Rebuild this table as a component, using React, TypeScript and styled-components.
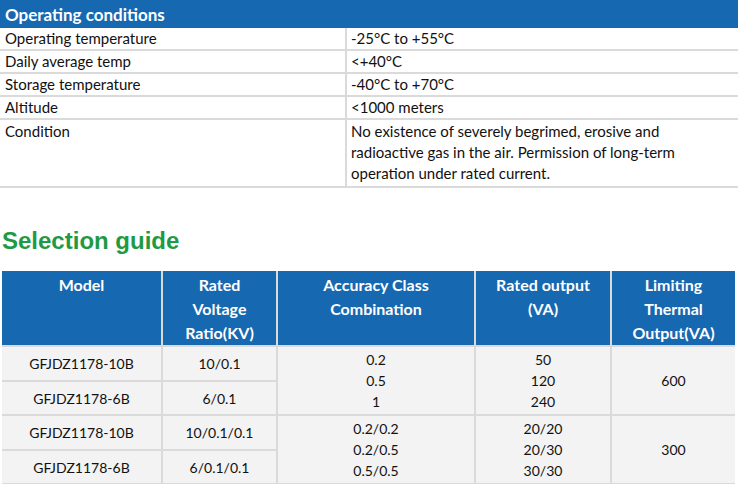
import styled, { createGlobalStyle } from "styled-components";

const GlobalStyle = createGlobalStyle`
  body {
    margin: 0;
    background: #ffffff;
    font-family: Lato, "Open Sans", sans-serif;
    color: #111111;
  }
`;

const BLUE = "#1668b0";
const LINE = "#dadada";

const conditions = [
  { name: "Operating temperature", value: "-25°C to +55°C" },
  { name: "Daily average temp", value: "<+40°C" },
  { name: "Storage temperature", value: "-40°C to +70°C" },
  { name: "Altitude", value: "<1000 meters" },
  {
    name: "Condition",
    value:
      "No existence of severely begrimed, erosive and radioactive gas in the air. Permission of long-term operation under rated current.",
  },
];

const headers = [
  { label: ["Model"], width: 161 },
  { label: ["Rated", "Voltage", "Ratio(KV)"], width: 115 },
  { label: ["Accuracy Class", "Combination"], width: 198 },
  { label: ["Rated output", "(VA)"], width: 136 },
  { label: ["Limiting", "Thermal", "Output(VA)"], width: 123 },
];

const groups = [
  {
    rows: [
      { model: "GFJDZ1178-10B", ratio: "10/0.1" },
      { model: "GFJDZ1178-6B", ratio: "6/0.1" },
    ],
    accuracy: ["0.2", "0.5", "1"],
    output: ["50", "120", "240"],
    limit: "600",
  },
  {
    rows: [
      { model: "GFJDZ1178-10B", ratio: "10/0.1/0.1" },
      { model: "GFJDZ1178-6B", ratio: "6/0.1/0.1" },
    ],
    accuracy: ["0.2/0.2", "0.2/0.5", "0.5/0.5"],
    output: ["20/20", "20/30", "30/30"],
    limit: "300",
  },
];

function App() {
  return (
    <>
      <GlobalStyle />
      <Page>
        <ConditionsTable>
          <colgroup>
            <col style={{ width: 347 }} />
            <col style={{ width: 391 }} />
          </colgroup>
          <thead>
            <tr>
              <ConditionsHead colSpan={2}>Operating conditions</ConditionsHead>
            </tr>
          </thead>
          <tbody>
            {conditions.map((c) => (
              <tr key={c.name}>
                <NameCell $tall={c.name === "Condition"}>{c.name}</NameCell>
                <ValueCell $tall={c.name === "Condition"}>{c.value}</ValueCell>
              </tr>
            ))}
          </tbody>
        </ConditionsTable>

        <SectionTitle>Selection guide</SectionTitle>

        <GuideTable>
          <colgroup>
            {headers.map((h, i) => (
              <col key={i} style={{ width: h.width }} />
            ))}
          </colgroup>
          <thead>
            <tr>
              {headers.map((h, i) => (
                <GuideHead key={i} $last={i === headers.length - 1}>
                  {h.label.map((l) => (
                    <div key={l}>{l}</div>
                  ))}
                </GuideHead>
              ))}
            </tr>
          </thead>
          <tbody>
            {groups.map((g, gi) =>
              g.rows.map((r, ri) => (
                <tr key={gi + "-" + ri}>
                  <BodyCell $height={ri === 0 ? 33 : 32}>{r.model}</BodyCell>
                  <BodyCell $height={ri === 0 ? 33 : 32}>{r.ratio}</BodyCell>
                  {ri === 0 && (
                    <>
                      <StackCell rowSpan={2}>
                        {g.accuracy.map((a) => (
                          <div key={a}>{a}</div>
                        ))}
                      </StackCell>
                      <StackCell rowSpan={2}>
                        {g.output.map((o) => (
                          <div key={o}>{o}</div>
                        ))}
                      </StackCell>
                      <StackCell rowSpan={2} $last>
                        {g.limit}
                      </StackCell>
                    </>
                  )}
                </tr>
              ))
            )}
          </tbody>
        </GuideTable>
      </Page>
    </>
  );
}

const Page = styled.div`
  width: 738px;
  display: flex;
  flex-direction: column;
`;

const ConditionsTable = styled.table`
  width: 738px;
  border-collapse: separate;
  border-spacing: 0;
  table-layout: fixed;
  font-size: 15px;
`;

const ConditionsHead = styled.th`
  background: ${BLUE};
  color: #ffffff;
  font-size: 17px;
  font-weight: 700;
  text-align: left;
  height: 28px;
  padding: 0 5px;
  box-sizing: border-box;
`;

const NameCell = styled.td<{ $tall?: boolean }>`
  box-sizing: border-box;
  height: ${(p) => (p.$tall ? 68 : 23)}px;
  padding: 0 4px 0 5px;
  vertical-align: ${(p) => (p.$tall ? "top" : "middle")};
  padding-top: ${(p) => (p.$tall ? 1 : 0)}px;
  border-right: 2px solid ${LINE};
  border-bottom: 2px solid ${LINE};
  line-height: 21px;
`;

const ValueCell = styled.td<{ $tall?: boolean }>`
  box-sizing: border-box;
  height: ${(p) => (p.$tall ? 68 : 23)}px;
  padding: 0 60px 0 4px;
  vertical-align: ${(p) => (p.$tall ? "top" : "middle")};
  padding-top: ${(p) => (p.$tall ? 1 : 0)}px;
  border-bottom: 2px solid ${LINE};
  line-height: 21px;
`;

const SectionTitle = styled.h2`
  margin: 39px 0 16px 2px;
  font-family: "Liberation Sans", Arial, sans-serif;
  font-size: 24px;
  font-weight: 700;
  line-height: 28px;
  color: #1f9a43;
`;

const GuideTable = styled.table`
  margin-left: 2px;
  width: 733px;
  border-collapse: separate;
  border-spacing: 0;
  table-layout: fixed;
  font-size: 14px;
`;

const GuideHead = styled.th<{ $last?: boolean }>`
  box-sizing: border-box;
  height: 74px;
  padding: 2px 0 0;
  vertical-align: top;
  background: ${BLUE};
  color: #ffffff;
  font-size: 16px;
  font-weight: 700;
  line-height: 24px;
  text-align: center;
  border-right: ${(p) => (p.$last ? "none" : `2px solid ${LINE}`)};
  border-bottom: 2px solid ${LINE};
`;

const BodyCell = styled.td<{ $height: number }>`
  box-sizing: border-box;
  height: ${(p) => p.$height + 2}px;
  background: #f3f3f3;
  text-align: center;
  vertical-align: middle;
  border-right: 2px solid ${LINE};
  border-bottom: 2px solid ${LINE};
  padding: 0;
`;

const StackCell = styled.td<{ $last?: boolean }>`
  background: #f3f3f3;
  text-align: center;
  vertical-align: middle;
  line-height: 21px;
  border-right: ${(p) => (p.$last ? "none" : `2px solid ${LINE}`)};
  border-bottom: 2px solid ${LINE};
  padding: 0;
`;

export default App;
